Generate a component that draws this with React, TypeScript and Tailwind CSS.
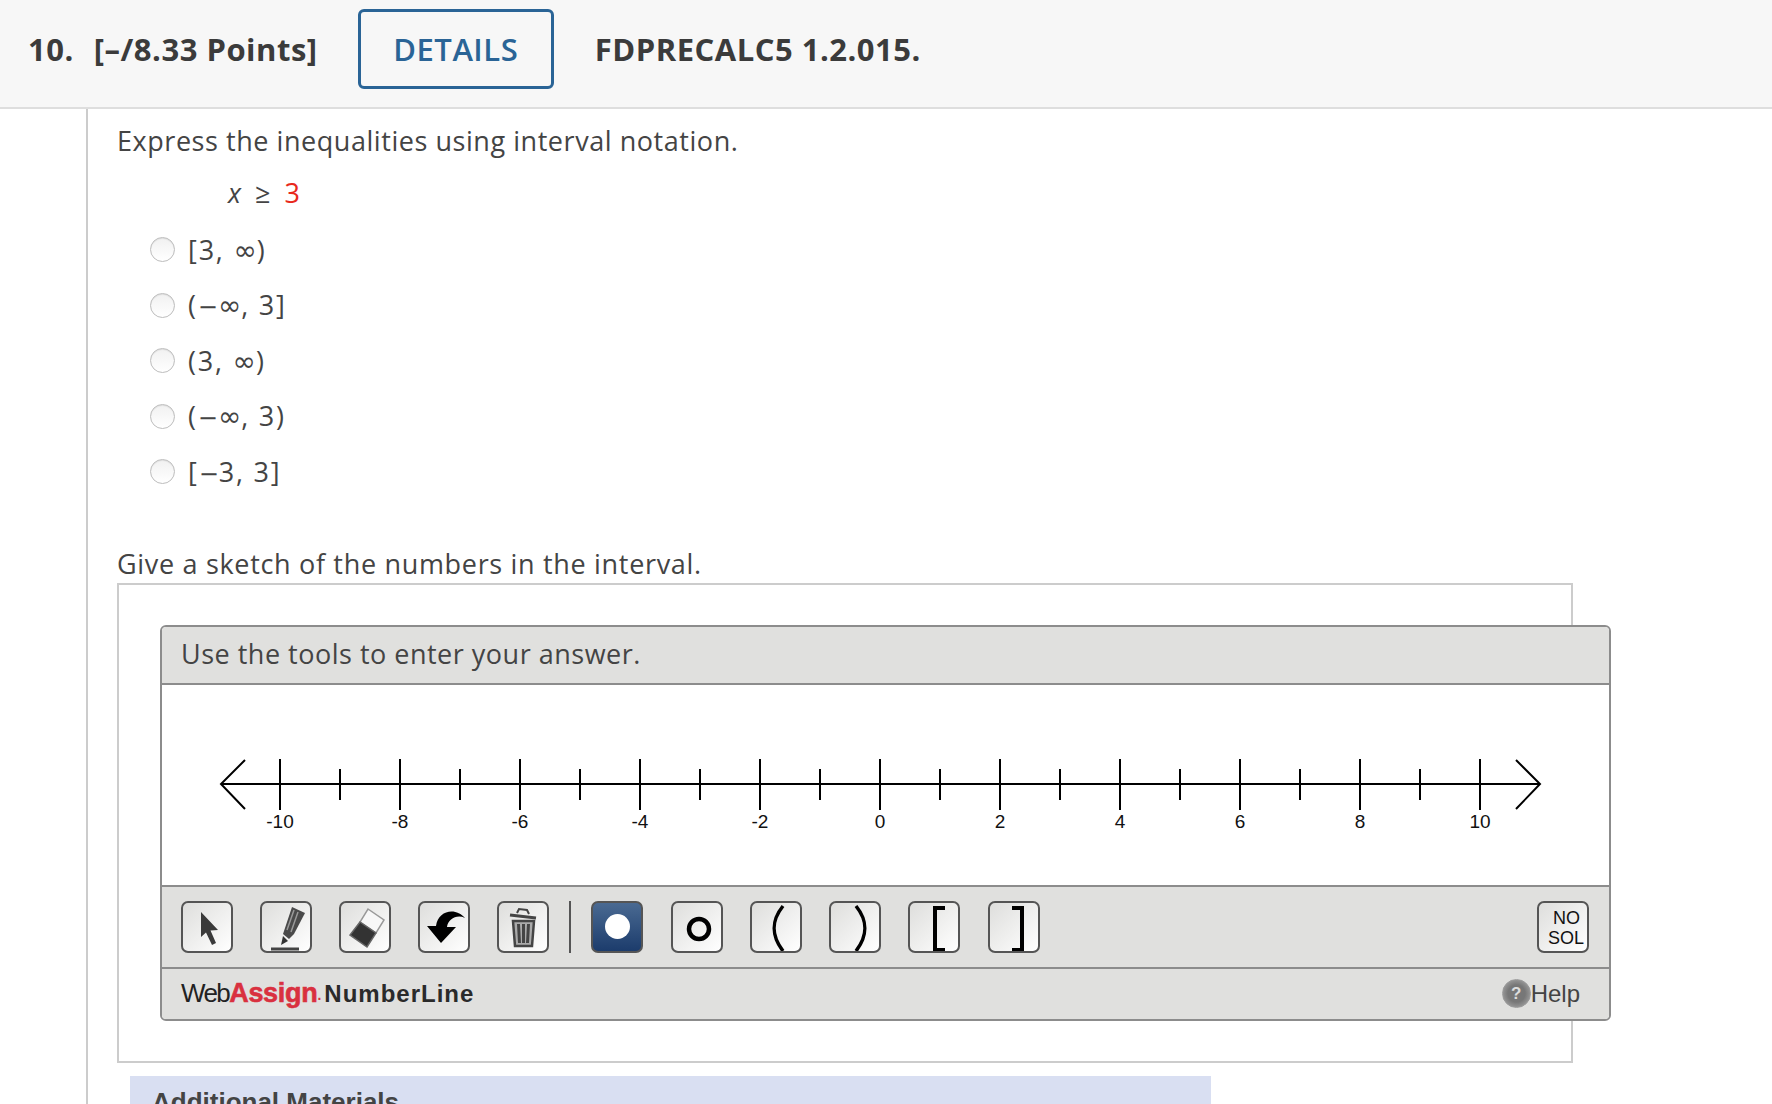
const sans = "font-['Open_Sans',sans-serif]"
const arial = "font-['Liberation_Sans',Arial,sans-serif]"

const Inf = () => <span className="font-['DejaVu_Sans',sans-serif] text-[28px] tracking-normal leading-none">∞</span>
const Minus = () => <span className="font-['DejaVu_Sans',sans-serif] text-[24px] tracking-normal leading-none">−</span>

const options = [
  <>[3, <Inf />)</>,
  <>(<Minus /><Inf />, 3]</>,
  <>(3, <Inf />)</>,
  <>(<Minus /><Inf />, 3)</>,
  <>[<Minus />3, 3]</>,
]

const btn =
  "w-[52px] h-[52px] shrink-0 rounded-[7px] border-2 border-[#555] bg-linear-to-br from-[#dededc] to-white flex items-center justify-center overflow-hidden"

const ticks = Array.from({ length: 21 }, (_, i) => i - 10)

const NumberLine = () => (
  <svg width="1447" height="200" viewBox="162 684 1447 200" className="block">
    <g stroke="#000" strokeWidth="2" fill="none">
      <path d="M221 783H1540" />
      <path d="M245 759L221 783L245 808" />
      <path d="M1516 759L1540 783L1516 808" />
      {ticks.map((t) => {
        const x = 280 + (t + 10) * 60
        const major = t % 2 === 0
        return <path key={t} d={`M${x} ${major ? 758 : 768}V${major ? 809 : 799}`} />
      })}
    </g>
    {ticks
      .filter((t) => t % 2 === 0)
      .map((t) => (
        <text
          key={t}
          x={280 + (t + 10) * 60}
          y="827"
          textAnchor="middle"
          fontSize="19"
          fontFamily="'Liberation Sans', Arial, sans-serif"
          fill="#111"
        >
          {t}
        </text>
      ))}
  </svg>
)

const Icon = ({ children }: { children: React.ReactNode }) => (
  <svg width="48" height="48" viewBox="0 0 48 48">
    {children}
  </svg>
)

const App = () => {
  return (
    <div className={`h-[1104px] overflow-hidden bg-white text-[#444] ${sans}`}>
      <div className="h-[109px] bg-[#f7f7f7] border-b-2 border-[#dedede] flex items-center font-bold text-[31px] tracking-[0.5px] text-[#3b3b3b] pb-[9px]">
        <span className="ml-[28px]">10.</span>
        <span className="ml-[20px] w-[224px] whitespace-nowrap">[–/8.33 Points]</span>
        <button className="ml-[40px] w-[196px] h-[80px] border-[3px] border-[#2a6496] rounded-[6px] text-[#2a6496] text-[31px] font-semibold">
          DETAILS
        </button>
        <span className="ml-[41px] whitespace-nowrap">FDPRECALC5 1.2.015.</span>
      </div>

      <div className="ml-[86px] border-l-2 border-[#ccc] pl-[29px] h-[995px]">
        <p className="pt-[13px] text-[27px] leading-[38px] tracking-[0.55px]">Express the inequalities using interval notation.</p>
        <p className="mt-[14px] ml-[111px] text-[27px] leading-[38px] [word-spacing:7px]">
          <i>x</i> ≥ <span className="text-[#e8291c]">3</span>
        </p>
        <div className="mt-[10px] ml-[33px] flex flex-col">
          {options.map((o, i) => (
            <label key={i} className="h-[55.5px] flex items-center text-[27px] tracking-[1.8px]">
              <span className="w-[25px] h-[25px] rounded-full border border-[#bdbdbd] bg-linear-to-b from-[#f1f1f1] to-white shadow-[inset_0_1px_1px_rgba(0,0,0,0.08)]" />
              <span className="ml-[13px]">{o}</span>
            </label>
          ))}
        </div>
        <p className="mt-[45px] text-[27px] leading-[38px] tracking-[0.68px]">Give a sketch of the numbers in the interval.</p>

        <div className="w-[1456px] h-[480px] border-2 border-[#ccc] pt-[40px] pl-[41px]">
          <div className="w-[1451px] border-2 border-[#8c8c8c] rounded-[6px] overflow-hidden bg-white">
            <div className="h-[58px] bg-[#e0e0de] border-b-2 border-[#8c8c8c] flex items-center pl-[19px] text-[27px] tracking-[0.5px]">
              Use the tools to enter your answer.
            </div>
            <NumberLine />
            <div className="h-[84px] bg-[#e0e0de] border-y-2 border-[#8c8c8c] flex items-center pl-[19px] pr-[20px]">
              <div className="flex items-center">
                <div className={btn}>
                  <Icon>
                    <path d="M18 9V34L23 29.5L29 42L33 40L27.5 27.5L35 27Z" fill="#3a3a3a" />
                  </Icon>
                </div>
                <div className={`${btn} ml-[27px]`}>
                  <Icon>
                    <path d="M30 4L43 10L32 31L27 36L21 31Z" fill="#4a4a4a" />
                    <path d="M21 33L26 38L19 42Z" fill="#333" />
                    <path d="M32 7L25 27M36 9L29 29" stroke="#999" strokeWidth="1.5" />
                    <path d="M9 46H37" stroke="#444" strokeWidth="3" />
                  </Icon>
                </div>
                <div className={`${btn} ml-[27px]`}>
                  <Icon>
                    <path d="M27 6L43 17L35 30L19 19Z" fill="#f7f7f7" stroke="#999" strokeWidth="1.5" />
                    <path d="M19 19L35 30L26 44L9 32Z" fill="#333" stroke="#666" strokeWidth="1.5" />
                  </Icon>
                </div>
                <div className={`${btn} ml-[27px]`}>
                  <Icon>
                    <path d="M45 15C36 4 18 7 16 23L7 23L21 40L36 24L27 24C28 16 37 11 45 15Z" fill="#000" />
                  </Icon>
                </div>
                <div className={`${btn} ml-[27px]`}>
                  <Icon>
                    <path d="M11 12L37 15" stroke="#444" strokeWidth="3" fill="none" />
                    <path d="M18 10L20 6L28 7L30 11" stroke="#444" strokeWidth="2" fill="none" />
                    <path d="M14 18H35L33 43H16Z" fill="#aaa" stroke="#444" strokeWidth="2.5" />
                    <path d="M19.5 21L20.5 40M24.5 21V40M29.5 21L28.5 40" stroke="#444" strokeWidth="3" />
                  </Icon>
                </div>
                <div className="w-[2px] h-[52px] bg-[#555] ml-[20px]" />
                <div className="ml-[20px] w-[52px] h-[52px] rounded-[7px] border-2 border-[#555] bg-linear-to-b from-[#4a6a92] to-[#1c3c6c] flex items-center justify-center">
                  <span className="w-[25px] h-[25px] rounded-full bg-white" />
                </div>
                <div className={`${btn} ml-[28px]`}>
                  <Icon>
                    <circle cx="26" cy="26" r="10" fill="none" stroke="#000" strokeWidth="4.5" />
                  </Icon>
                </div>
                <div className={`${btn} ml-[27px]`}>
                  <Icon>
                    <path d="M31 3C19 18 19 32 31 48" fill="none" stroke="#000" strokeWidth="3.5" />
                  </Icon>
                </div>
                <div className={`${btn} ml-[27px]`}>
                  <Icon>
                    <path d="M25 3C37 18 37 32 25 48" fill="none" stroke="#000" strokeWidth="3.5" />
                  </Icon>
                </div>
                <div className={`${btn} ml-[27px]`}>
                  <Icon>
                    <path d="M35 5H25V47H35" fill="none" stroke="#000" strokeWidth="4" />
                  </Icon>
                </div>
                <div className={`${btn} ml-[28px]`}>
                  <Icon>
                    <path d="M22 5H32V47H22" fill="none" stroke="#000" strokeWidth="4" />
                  </Icon>
                </div>
              </div>
              <div className={`${btn} ml-auto ${arial} text-[18px] leading-[20px] text-[#111] text-right !justify-end pr-[3px] pt-[2px]`}>
                <span>
                  <span className="pr-[4px]">NO</span>
                  <br />
                  SOL
                </span>
              </div>
            </div>
            <div className={`h-[50px] bg-[#e0e0de] flex items-center pl-[19px] pr-[29px] ${arial}`}>
              <span className="text-[26px] tracking-[-1.6px] text-[#222] font-light">Web</span>
              <span className="text-[27px] tracking-[-0.3px] font-bold text-[#d9303f] [-webkit-text-stroke:0.6px_#d9303f]">Assign</span>
              <span className="text-[14px] self-end pb-[13px] font-bold text-[#d9303f]">.</span>
              <span className="ml-[3px] text-[24px] font-bold tracking-[1px] text-[#2a2a2a]">NumberLine</span>
              <span className="ml-auto flex items-center text-[24px] text-[#444]">
                <span className="w-[29px] h-[29px] rounded-full bg-[radial-gradient(circle,#777_45%,#b5b5b5_100%)] border border-[#999] flex items-center justify-center text-[#ddd] text-[17px] font-bold">
                  ?
                </span>
                Help
              </span>
            </div>
          </div>
        </div>

        <div className={`mt-[13px] ml-[13px] w-[1081px] h-[40px] bg-[#d9dff2] pl-[22px] pt-[9px] ${arial} text-[26px] leading-[34px] font-bold text-[#444]`}>
          Additional Materials
        </div>
      </div>
    </div>
  )
}

export default App
